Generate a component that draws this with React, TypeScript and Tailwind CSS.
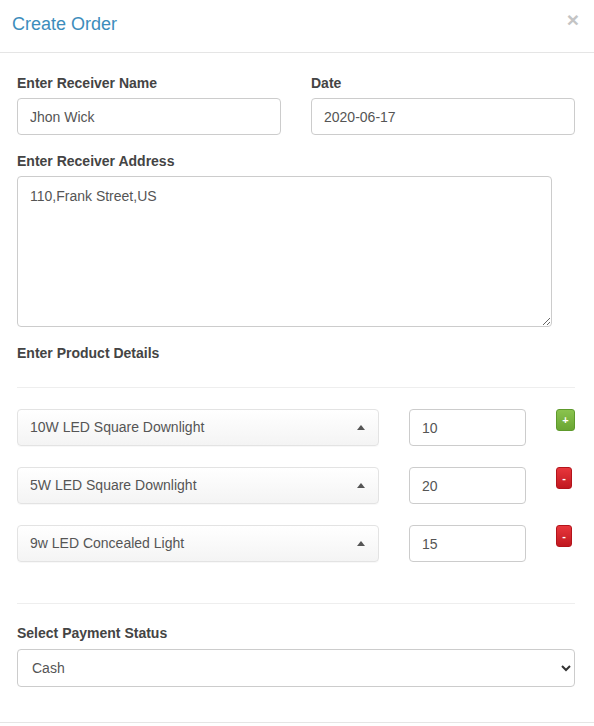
import React from "react";

function Caret() {
  return (
    <svg width="8" height="5" viewBox="0 0 8 5" className="block">
      <path d="M0 5 L4 0 L8 5 Z" fill="#555" />
    </svg>
  );
}

function ProductRow({ name, qty, add }: { name: string; qty: string; add?: boolean }) {
  return (
    <div className="flex items-start">
      <div className="w-[362px] h-[37px] rounded-[4px] border border-[#e3e3e3] bg-gradient-to-b from-white to-[#f4f4f4] flex items-center justify-between pl-[12px] pr-[13px] text-[#555] shadow-[0_1px_1px_rgba(0,0,0,0.03)]">
        <span>{name}</span>
        <Caret />
      </div>
      <input
        readOnly
        value={qty}
        className="ml-[30px] w-[117px] h-[37px] rounded-[4px] border border-[#ccc] pl-[12px] text-[#555] outline-none"
      />
      {add ? (
        <div className="ml-[30px] w-[19px] h-[22px] rounded-[3px] border border-[#5e9a2c] bg-gradient-to-b from-[#8ac34e] to-[#6aa533] flex items-center justify-center text-white text-[11px] font-bold leading-none">
          +
        </div>
      ) : (
        <div className="ml-[30px] w-[16px] h-[22px] rounded-[3px] border border-[#b3141b] bg-gradient-to-b from-[#e8363c] to-[#c1171f] flex items-center justify-center text-white text-[11px] font-bold leading-none">
          -
        </div>
      )}
    </div>
  );
}

export default function App() {
  return (
    <div className="w-[594px] h-[726px] overflow-hidden bg-white font-['Liberation_Sans',Arial,sans-serif] text-[14px] text-[#444]">
      <div className="h-[722px]">
        <div className="h-[53px] border-b border-[#e5e5e5] flex items-start justify-between pl-[12px] pr-[15px]">
          <div className="pt-[13px] text-[18px] leading-[22px] text-[#3c8dbc]">Create Order</div>
          <div className="pt-[7px] text-[21px] font-bold leading-[26px] text-[#c4c4c4]">×</div>
        </div>
        <div className="pl-[17px] pr-[19px] pt-[20px]">
          <div className="grid grid-cols-2 gap-x-[30px]">
            <div>
              <div className="font-bold leading-[20px] mb-[5px]">Enter Receiver Name</div>
              <input
                readOnly
                value="Jhon Wick"
                className="w-full h-[37px] rounded-[4px] border border-[#ccc] pl-[12px] text-[#555] outline-none"
              />
            </div>
            <div>
              <div className="font-bold leading-[20px] mb-[5px]">Date</div>
              <input
                readOnly
                value="2020-06-17"
                className="w-full h-[37px] rounded-[4px] border border-[#ccc] pl-[12px] text-[#555] outline-none"
              />
            </div>
          </div>
          <div className="mt-[16px] font-bold leading-[20px] mb-[5px]">Enter Receiver Address</div>
          <textarea
            readOnly
            value="110,Frank Street,US"
            className="block w-[535px] h-[151px] rounded-[4px] border border-[#ccc] pl-[12px] pt-[9px] leading-[20px] text-[#555] outline-none"
          />
          <div className="mt-[16px] font-bold leading-[20px]">Enter Product Details</div>
          <div className="mt-[24px] border-t border-[#eee]" />
          <div className="mt-[21px] flex flex-col gap-[21px]">
            <ProductRow name="10W LED Square Downlight" qty="10" add />
            <ProductRow name="5W LED Square Downlight" qty="20" />
            <ProductRow name="9w LED Concealed Light" qty="15" />
          </div>
          <div className="mt-[41px] border-t border-[#eee]" />
          <div className="mt-[19px] font-bold leading-[20px] mb-[6px]">Select Payment Status</div>
          <div className="relative">
            <select className="appearance-none w-full h-[38px] rounded-[4px] border border-[#ccc] bg-white pl-[14px] text-[#555] outline-none">
              <option>Cash</option>
            </select>
            <svg
              width="10"
              height="7"
              viewBox="0 0 10 7"
              className="absolute right-[4px] top-[16px] pointer-events-none"
            >
              <path d="M1 1 L5 5 L9 1" fill="none" stroke="#333" strokeWidth="2" />
            </svg>
          </div>
        </div>
      </div>
      <div className="border-t border-[#e5e5e5]" />
    </div>
  );
}
